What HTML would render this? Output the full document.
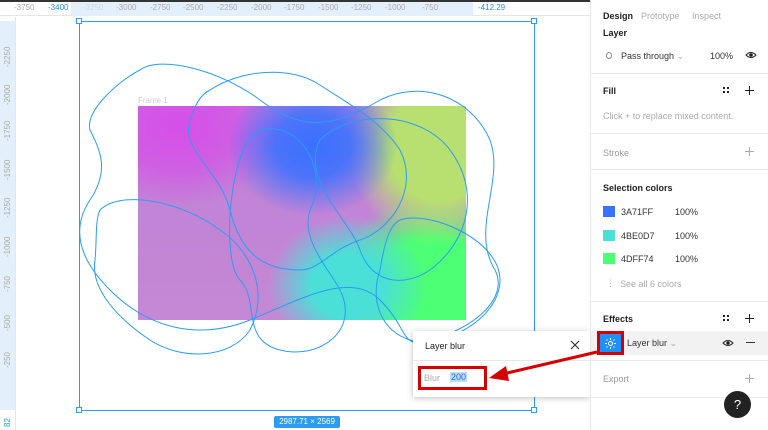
<!DOCTYPE html>
<html><head><style>
*{margin:0;padding:0;box-sizing:border-box}
body{width:768px;height:430px;overflow:hidden;background:#fff;font-family:"Liberation Sans",sans-serif;position:relative;font-size:9px;color:#333}
.a{position:absolute}
.panel{left:590px;top:0;width:178px;height:430px;border-left:1px solid #e6e6e6;background:#fff}
.hr{position:absolute;left:0;width:178px;height:1px;background:#e8e8e8}
.t{position:absolute;white-space:nowrap}
.b{font-weight:bold;color:#222}
.g{color:#aaa}
.rl{color:#aaa;font-size:8px}
</style></head><body>
<div class="a" style="left:0;top:0;width:590px;height:2px;background:#333"></div>
<div class="a" style="left:0;top:2px;width:590px;height:14px;background:#fff;border-bottom:1px solid #e6e6e6"></div>
<div class="a" style="left:71px;top:2px;width:402px;height:14px;background:#e3f0fc"></div>
<div class="t rl" style="left:14px;top:3px">-3750</div>
<div class="t" style="left:48px;top:3px;color:#1e90ff;font-size:8px">-3400</div>
<div class="t rl" style="left:83px;top:3px;color:#c8d8e8">-3250</div>
<div class="t rl" style="left:116px;top:3px">-3000</div>
<div class="t rl" style="left:150px;top:3px">-2750</div>
<div class="t rl" style="left:183px;top:3px">-2500</div>
<div class="t rl" style="left:217px;top:3px">-2250</div>
<div class="t rl" style="left:251px;top:3px">-2000</div>
<div class="t rl" style="left:284px;top:3px">-1750</div>
<div class="t rl" style="left:318px;top:3px">-1500</div>
<div class="t rl" style="left:351px;top:3px">-1250</div>
<div class="t rl" style="left:385px;top:3px">-1000</div>
<div class="t rl" style="left:422px;top:3px">-750</div>
<div class="t" style="left:478px;top:3px;color:#1e90ff;font-size:8px">-412.29</div>
<div class="a" style="left:0;top:17px;width:16px;height:413px;background:#fff;border-right:1px solid #e6e6e6"></div>
<div class="a" style="left:0;top:21px;width:15px;height:389px;background:#e3f0fc"></div>
<svg class="a" style="left:0;top:17px" width="16" height="413">
<g font-family="Liberation Sans" font-size="8" fill="#aaa">
<text transform="translate(10,50) rotate(-90)">-2250</text>
<text transform="translate(10,88) rotate(-90)">-2000</text>
<text transform="translate(10,124) rotate(-90)">-1750</text>
<text transform="translate(10,163) rotate(-90)">-1500</text>
<text transform="translate(10,201) rotate(-90)">-1250</text>
<text transform="translate(10,240) rotate(-90)">-1000</text>
<text transform="translate(10,275) rotate(-90)">-750</text>
<text transform="translate(10,314) rotate(-90)">-500</text>
<text transform="translate(10,351) rotate(-90)">-250</text>
<text transform="translate(10,410) rotate(-90)" fill="#1e90ff">82</text>
</g></svg>
<div class="a" style="left:138px;top:106px;width:328px;height:214px;background:
radial-gradient(ellipse 85px 70px at 175px 40px,#3a71ff 0%,#3a71ffdd 45%,transparent 100%),
radial-gradient(ellipse 110px 80px at 40px 20px,#d64ee8 0%,#d64ee8aa 55%,transparent 100%),
radial-gradient(ellipse 90px 100px at 300px 40px,#b8e070 0%,#b8e070 55%,transparent 100%),
radial-gradient(ellipse 80px 70px at 210px 180px,#4be0d7 0%,#4be0d7 45%,transparent 100%),
radial-gradient(ellipse 100px 90px at 295px 180px,#4dff74 0%,#4dff74 55%,transparent 100%),
linear-gradient(#c080d8,#c488d4)"></div>
<div class="t" style="left:138px;top:96px;color:#ccc;font-size:8px">Frame 1</div>
<svg class="a" style="left:0;top:0" width="590" height="430" fill="none" stroke="#2b9cf2" stroke-width="1">
<path d="M140 70 C160 55 220 70 260 100 C300 130 330 130 380 100 C420 80 470 95 490 140 C505 180 470 230 495 270 C510 300 470 330 430 340 C400 350 410 330 380 300 C350 270 300 300 250 320 C200 340 150 330 110 290 C80 260 70 230 90 200 C110 170 100 150 90 130 C85 110 120 80 140 70Z"/>
<path d="M210 90 C240 70 290 65 320 85 C350 105 380 120 400 150 C420 190 390 230 360 240 C330 250 320 270 300 270 C260 270 240 250 230 210 C220 170 180 150 190 120 C195 105 200 95 210 90Z"/>
<path d="M100 210 C120 190 180 200 220 230 C250 250 270 290 250 330 C230 360 180 360 150 340 C120 320 90 290 95 260 C97 240 95 220 100 210Z"/>
<path d="M320 140 C350 110 420 110 450 150 C480 190 470 240 430 270 C400 290 370 280 360 250 C350 220 300 180 320 140Z"/>
<path d="M260 130 C300 120 330 170 310 210 C300 240 330 270 340 290 C360 330 320 360 280 350 C240 340 260 300 240 280 C220 260 230 140 260 130Z"/>
<path d="M400 220 C430 210 500 240 500 280 C500 320 440 350 410 340 C380 330 370 300 380 270 C385 240 390 225 400 220Z"/>
</svg>
<div class="a" style="left:79px;top:21px;width:456px;height:390px;border:1px solid #2b9cf2"></div>
<div class="a" style="left:76px;top:18px;width:6px;height:6px;border:1px solid #2b9cf2;background:#fff"></div>
<div class="a" style="left:531px;top:18px;width:6px;height:6px;border:1px solid #2b9cf2;background:#fff"></div>
<div class="a" style="left:76px;top:407px;width:6px;height:6px;border:1px solid #2b9cf2;background:#fff"></div>
<div class="a" style="left:531px;top:407px;width:6px;height:6px;border:1px solid #2b9cf2;background:#fff"></div>
<div class="a" style="left:274px;top:416px;width:66px;height:12px;background:#2b9cf2;border-radius:2px;color:#fff;font-size:8px;text-align:center;line-height:12px">2987.71 × 2569</div>
<div class="a" style="left:413px;top:331px;width:177px;height:66px;background:#fff;box-shadow:0 1px 6px rgba(0,0,0,.25)">
<div class="t" style="left:12px;top:10px;color:#222">Layer blur</div>
<svg class="a" style="left:157px;top:9px" width="10" height="10" stroke="#333" stroke-width="1.2"><path d="M1 1L9 9M9 1L1 9"/></svg>
<div class="a" style="left:0;top:29px;width:177px;height:1px;background:#e8e8e8"></div>
<div class="a" style="left:5px;top:35px;width:69px;height:24px;border:3px solid #d40000"></div>
<div class="t g" style="left:11px;top:42px">Blur</div>
<div class="t" style="left:37px;top:41px;background:#bcdcfa;color:#1e6fc8;padding:0 1px">200</div>
</div>
<div class="a panel">
<div class="t b" style="left:12px;top:11px">Design</div>
<div class="t g" style="left:50px;top:11px">Prototype</div>
<div class="t g" style="left:101px;top:11px">Inspect</div>
<div class="t b" style="left:12px;top:28px">Layer</div>
<div class="a" style="left:15px;top:52px;width:6px;height:7px;border:1px solid #888;border-radius:50%"></div>
<div class="t" style="left:30px;top:51px">Pass through <span class="g">⌄</span></div>
<div class="t" style="left:119px;top:51px">100%</div>
<svg class="a" style="left:154px;top:51px" width="12" height="8"><path d="M1 4Q6 -1 11 4Q6 9 1 4Z" fill="none" stroke="#222"/><circle cx="6" cy="4" r="1.8" fill="#222"/></svg>
<div class="hr" style="top:73px"></div>
<div class="t b" style="left:12px;top:86px">Fill</div>
<svg class="a" style="left:132px;top:87px" width="7" height="7" fill="#222"><rect x="0" y="0" width="2" height="2"/><rect x="4" y="0" width="2" height="2"/><rect x="0" y="4" width="2" height="2"/><rect x="4" y="4" width="2" height="2"/></svg>
<svg class="a" style="left:154px;top:86px" width="9" height="9" stroke="#222"><path d="M4.5 0v9M0 4.5h9"/></svg>
<div class="t g" style="left:12px;top:111px">Click + to replace mixed content.</div>
<div class="hr" style="top:133px"></div>
<div class="t" style="left:12px;top:148px;color:#999">Stroke</div>
<svg class="a" style="left:154px;top:147px" width="9" height="9" stroke="#aaa"><path d="M4.5 0v9M0 4.5h9"/></svg>
<div class="hr" style="top:169px"></div>
<div class="t b" style="left:12px;top:183px">Selection colors</div>
<div class="a" style="left:12px;top:206px;width:12px;height:11px;background:#3a71ff"></div>
<div class="t" style="left:30px;top:207px">3A71FF</div><div class="t" style="left:84px;top:207px">100%</div>
<div class="a" style="left:12px;top:230px;width:12px;height:11px;background:#4be0d7"></div>
<div class="t" style="left:30px;top:231px">4BE0D7</div><div class="t" style="left:84px;top:231px">100%</div>
<div class="a" style="left:12px;top:253px;width:12px;height:11px;background:#4dff74"></div>
<div class="t" style="left:30px;top:254px">4DFF74</div><div class="t" style="left:84px;top:254px">100%</div>
<div class="t g" style="left:15px;top:278px">⋮</div>
<div class="t g" style="left:29px;top:279px">See all 6 colors</div>
<div class="hr" style="top:301px"></div>
<div class="t b" style="left:12px;top:314px">Effects</div>
<svg class="a" style="left:132px;top:315px" width="7" height="7" fill="#222"><rect x="0" y="0" width="2" height="2"/><rect x="4" y="0" width="2" height="2"/><rect x="0" y="4" width="2" height="2"/><rect x="4" y="4" width="2" height="2"/></svg>
<svg class="a" style="left:154px;top:314px" width="9" height="9" stroke="#222"><path d="M4.5 0v9M0 4.5h9"/></svg>
<div class="a" style="left:0;top:331px;width:178px;height:24px;background:#f2f2f2"></div>
<div class="a" style="left:6px;top:331px;width:27px;height:24px;border:3px solid #d40000;background:#1e90ff"></div>
<svg class="a" style="left:14px;top:338px" width="11" height="11" stroke="#fff" stroke-width="1"><circle cx="5.5" cy="5.5" r="2" fill="none"/><path d="M5.5 0v2M5.5 9v2M0 5.5h2M9 5.5h2M1.5 1.5l1 1M8.5 8.5l1 1M1.5 9.5l1-1M8.5 2.5l1-1"/></svg>
<div class="t" style="left:36px;top:338px">Layer blur <span class="g">⌄</span></div>
<svg class="a" style="left:131px;top:339px" width="12" height="8"><path d="M1 4Q6 -1 11 4Q6 9 1 4Z" fill="none" stroke="#222"/><circle cx="6" cy="4" r="1.8" fill="#222"/></svg>
<div class="a" style="left:155px;top:342px;width:9px;height:1.2px;background:#333"></div>
<div class="hr" style="top:360px"></div>
<div class="t" style="left:12px;top:374px;color:#999">Export</div>
<svg class="a" style="left:154px;top:374px" width="9" height="9" stroke="#aaa"><path d="M4.5 0v9M0 4.5h9"/></svg>
<div class="hr" style="top:397px"></div>
<div class="a" style="left:133px;top:391px;width:27px;height:27px;border-radius:50%;background:#222;color:#fff;font-size:13px;text-align:center;line-height:27px">?</div>
</div>
<svg class="a" style="left:0;top:0" width="768" height="430"><path d="M597 352 L503 374" stroke="#d40000" stroke-width="3"/><path d="M489 378 L506 366 L509 381Z" fill="#d40000"/></svg>
</body></html>
